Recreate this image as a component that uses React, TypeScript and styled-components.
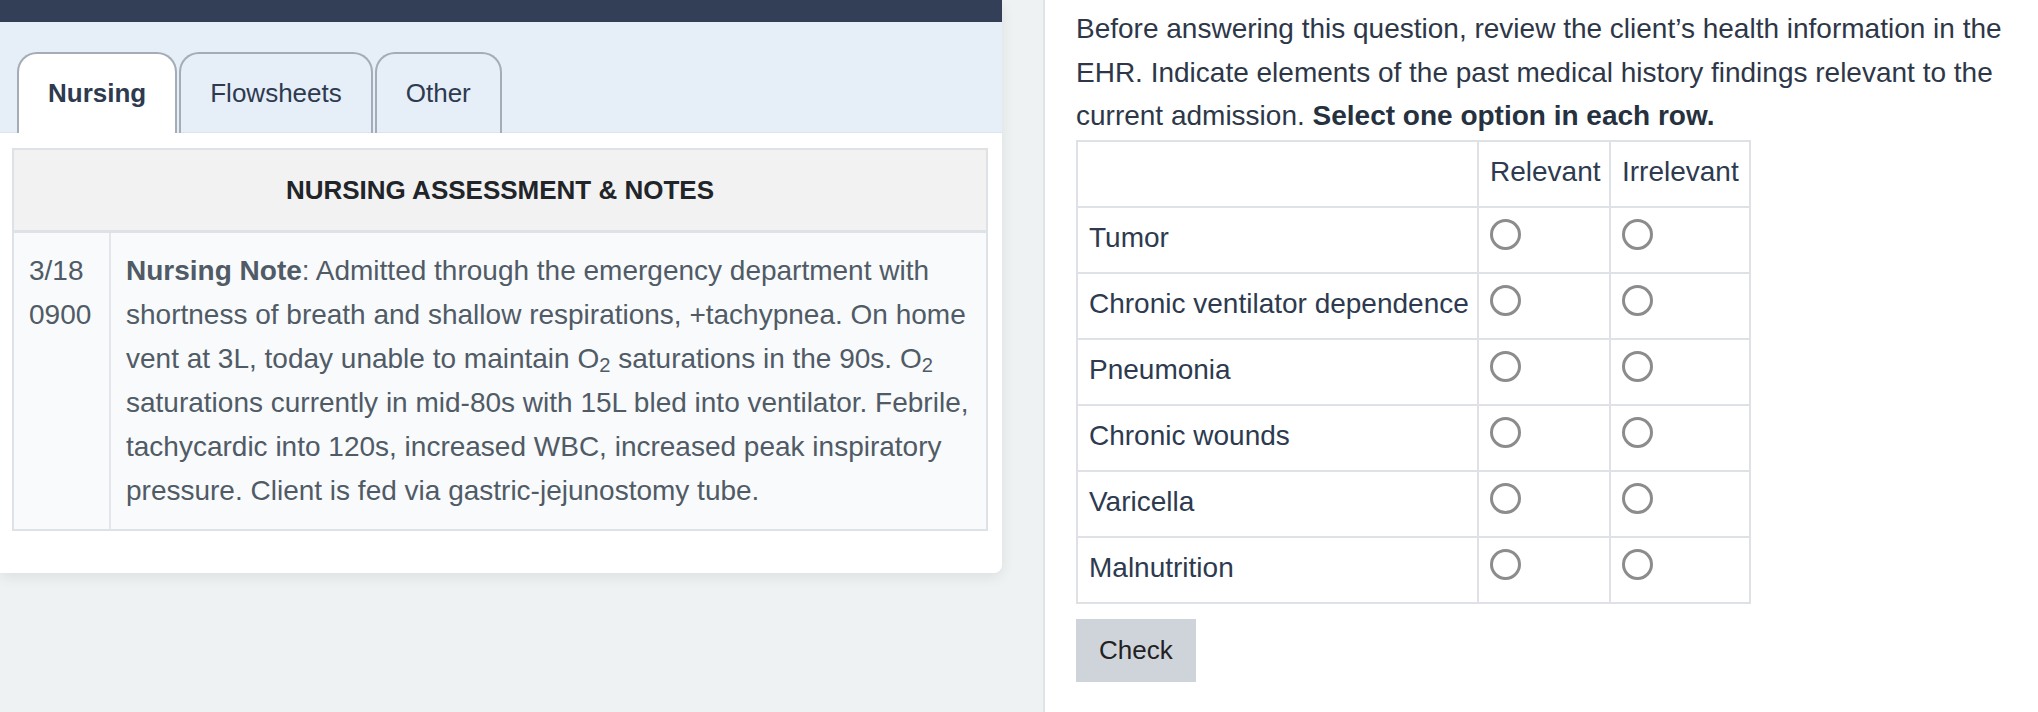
import { useState } from 'react';
import styled, { createGlobalStyle } from 'styled-components';

// --- 전역 스타일 ---
const GlobalStyle = createGlobalStyle`
  html, body {
    margin: 0;
    padding: 0;
  }
  body {
    font-family: "Liberation Sans", Arial, Helvetica, sans-serif;
    color: #2d3748;
  }
  * {
    box-sizing: border-box;
  }
`;

// --- 레이아웃 ---
const Page = styled.div`
  display: flex;
  height: 100vh;
  min-height: 712px;
  overflow: hidden;
`;

const LeftColumn = styled.div`
  width: 1045px;
  flex-shrink: 0;
  background-color: #eff2f3;
  border-right: 2px solid #e0e4e7;
`;

const RecordPanel = styled.div`
  width: 1002px;
  background-color: #ffffff;
  border-radius: 0 0 8px 0;
  box-shadow: 0 4px 14px rgba(0, 0, 0, 0.08);
`;

const TopBar = styled.div`
  height: 22px;
  background-color: #323f56;
`;

const TabStrip = styled.div`
  display: flex;
  align-items: flex-end;
  gap: 2px;
  height: 111px;
  padding-left: 17px;
  background-color: #e6eef7;
  border-bottom: 1px solid #dde4ec;
`;

const Tab = styled.button<{ $active?: boolean }>`
  height: 81px;
  margin-bottom: -1px;
  padding: 0 29px;
  border: 2px solid #a3acb7;
  border-bottom: none;
  border-radius: 20px 20px 0 0;
  background-color: ${({ $active }) => ($active ? '#ffffff' : 'transparent')};
  color: #2d3a4f;
  font-family: inherit;
  font-size: 26px;
  font-weight: ${({ $active }) => ($active ? 700 : 400)};
  cursor: pointer;
`;

const PanelBody = styled.div`
  padding: 15px 14px 42px 12px;
`;

const SectionHeader = styled.div`
  display: flex;
  align-items: center;
  justify-content: center;
  height: 85px;
  background-color: #f2f2f2;
  border: 2px solid #dee2e6;
  border-bottom-width: 3px;
  color: #212529;
  font-size: 26px;
  font-weight: 700;
`;

const NoteRow = styled.div`
  display: grid;
  grid-template-columns: 97px 1fr;
  background-color: #f8fafc;
  border: 2px solid #dee2e6;
  border-top: none;
  color: #505b66;
  font-size: 28px;
  line-height: 44px;
`;

const DateCell = styled.div`
  padding: 16px 0 16px 15px;
  border-right: 2px solid #e3e7ea;
`;

const NoteCell = styled.div`
  padding: 16px 6px 16px 15px;

  sub {
    font-size: 0.72em;
    line-height: 0;
    vertical-align: -0.22em;
  }
`;

// --- 오른쪽 문제 영역 ---
const QuestionPanel = styled.div`
  flex: 1;
  background-color: #ffffff;
  padding: 7px 28px 0 31px;
`;

const Prompt = styled.p`
  margin: 0 0 2px;
  font-size: 28px;
  line-height: 43.5px;
  color: #2d3748;

  strong {
    color: #263140;
  }
`;

const Matrix = styled.table`
  border-collapse: collapse;
  table-layout: fixed;
  width: 673px;
  font-size: 28px;
  color: #2d3a4f;
`;

const Cell = styled.td`
  height: 66px;
  padding: 9px 11px 13px;
  border: 2px solid #dee2e6;
  line-height: 42px;
  vertical-align: top;
  white-space: nowrap;
`;

const HeadCell = styled(Cell).attrs({ as: 'th' })`
  font-weight: 400;
  text-align: left;
`;

const Radio = styled.input.attrs({ type: 'radio' })`
  appearance: none;
  display: block;
  width: 31px;
  height: 31px;
  margin: 2px 0 0;
  border: 3px solid #8c8c8c;
  border-radius: 50%;
  background: #ffffff;
  cursor: pointer;

  &:checked {
    background: radial-gradient(circle, #2d3a4f 0 45%, #ffffff 48%);
  }
`;

const CheckButton = styled.button`
  margin-top: 15px;
  height: 63px;
  padding: 0 23px;
  border: none;
  background-color: #cfd4db;
  color: #222222;
  font-family: inherit;
  font-size: 26px;
  cursor: pointer;
`;

const tabs = ['Nursing', 'Flowsheets', 'Other'];

const findings = [
  'Tumor',
  'Chronic ventilator dependence',
  'Pneumonia',
  'Chronic wounds',
  'Varicella',
  'Malnutrition',
];

export default function App() {
  const [activeTab, setActiveTab] = useState('Nursing');
  const [answers, setAnswers] = useState<Record<string, string>>({});

  return (
    <>
      <GlobalStyle />
      <Page>
        <LeftColumn>
          <RecordPanel>
            <TopBar />
            <TabStrip>
              {tabs.map((t) => (
                <Tab key={t} $active={t === activeTab} onClick={() => setActiveTab(t)}>
                  {t}
                </Tab>
              ))}
            </TabStrip>
            <PanelBody>
              <SectionHeader>NURSING ASSESSMENT &amp; NOTES</SectionHeader>
              <NoteRow>
                <DateCell>
                  3/18
                  <br />
                  0900
                </DateCell>
                <NoteCell>
                  <strong>Nursing Note</strong>: Admitted through the emergency department with
                  shortness of breath and shallow respirations, +tachypnea. On home vent at 3L,
                  today unable to maintain O<sub>2</sub> saturations in the 90s. O<sub>2</sub>{' '}
                  saturations currently in mid-80s with 15L bled into ventilator. Febrile,
                  tachycardic into 120s, increased WBC, increased peak inspiratory pressure.
                  Client is fed via gastric-jejunostomy tube.
                </NoteCell>
              </NoteRow>
            </PanelBody>
          </RecordPanel>
        </LeftColumn>

        <QuestionPanel>
          <Prompt>
            Before answering this question, review the client’s health information in the EHR.
            Indicate elements of the past medical history findings relevant to the current
            admission. <strong>Select one option in each row.</strong>
          </Prompt>
          <Matrix>
            <colgroup>
              <col style={{ width: 401 }} />
              <col style={{ width: 132 }} />
              <col style={{ width: 140 }} />
            </colgroup>
            <thead>
              <tr>
                <HeadCell />
                <HeadCell>Relevant</HeadCell>
                <HeadCell>Irrelevant</HeadCell>
              </tr>
            </thead>
            <tbody>
              {findings.map((f) => (
                <tr key={f}>
                  <Cell>{f}</Cell>
                  {['Relevant', 'Irrelevant'].map((opt) => (
                    <Cell key={opt}>
                      <Radio
                        name={f}
                        checked={answers[f] === opt}
                        onChange={() => setAnswers({ ...answers, [f]: opt })}
                      />
                    </Cell>
                  ))}
                </tr>
              ))}
            </tbody>
          </Matrix>
          <CheckButton>Check</CheckButton>
        </QuestionPanel>
      </Page>
    </>
  );
}
